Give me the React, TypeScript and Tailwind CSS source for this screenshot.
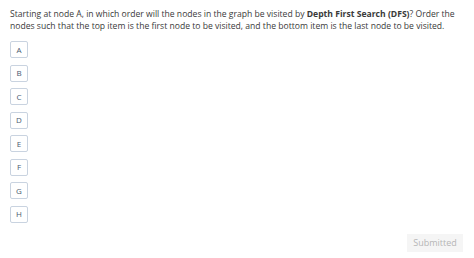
export default function App() {
  const items = ["A", "B", "C", "D", "E", "F", "G", "H"];
  return (
    <div className="w-[474px] h-[258px] bg-white relative" style={{ fontFamily: '"Open Sans", sans-serif' }}>
      <div className="px-[10px] pt-[8px]">
        <p className="text-[8.6px] leading-[12px] text-[#3a3a3a]">
          Starting at node A, in which order will the nodes in the graph be visited by <b>Depth First Search (DFS)</b>? Order the nodes such that the top item is the first node to be visited, and the bottom item is the last node to be visited.
        </p>
        <div className="mt-[9px] flex flex-col gap-[6.5px]">
          {items.map((l) => (
            <div key={l} className="w-[18px] h-[17px] border border-[#c9d3e0] rounded-[2px] flex items-center justify-center text-[8px] text-[#4a5a70]">
              {l}
            </div>
          ))}
        </div>
      </div>
      <div className="absolute right-[11px] bottom-[6px] w-[56px] h-[18px] bg-[#f5f5f5] flex items-center justify-center text-[9px] text-[#b5b5b5]">
        Submitted
      </div>
    </div>
  );
}
